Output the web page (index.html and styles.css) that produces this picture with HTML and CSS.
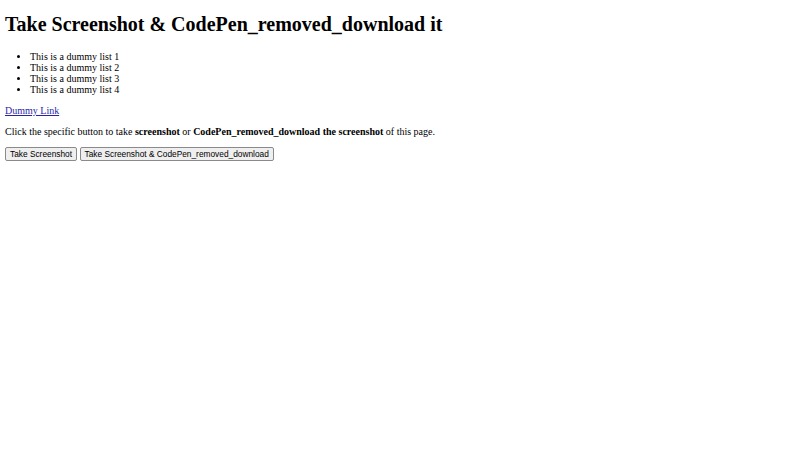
FILE: index.html
```html
<!DOCTYPE html>
<html>
<head>
<meta charset="utf-8">
<link rel="stylesheet" href="styles.css">
</head>
<body class="page">
<h1 class="title">Take Screenshot &amp; CodePen_removed_download it</h1>
<ul class="list">
<li>This is a dummy list 1</li>
<li>This is a dummy list 2</li>
<li>This is a dummy list 3</li>
<li>This is a dummy list 4</li>
</ul>
<a class="link" href="#">Dummy Link</a>
<p class="text">Click the specific button to take <b>screenshot</b> or <b>CodePen_removed_download the screenshot</b> of this page.</p>
<div class="buttons">
<button class="btn">Take Screenshot</button>
<button class="btn">Take Screenshot &amp; CodePen_removed_download</button>
</div>
</body>
</html>
```
FILE: styles.css
```css
.page {
  margin: 5px;
  font-family: "Liberation Serif", "Times New Roman", serif;
  font-size: 10px;
  color: #000;
  background: #fff;
}
.title {
  font-size: 20px;
  font-weight: bold;
  margin: 8px 0 15px;
}
.list {
  margin: 10px 0;
  padding-left: 25px;
}
.link {
  color: #2a1fa8;
  text-decoration: underline;
}
.text {
  margin: 10px 0;
}
.buttons {
  display: flex;
  gap: 2.5px;
}
.btn {
  font-family: "Liberation Sans", Arial, sans-serif;
  font-size: 8.33px;
  padding: 1px 4px;
  border: 1px solid #8a8a8a;
  border-radius: 2px;
  background: #efefef;
  color: #000;
}
```
